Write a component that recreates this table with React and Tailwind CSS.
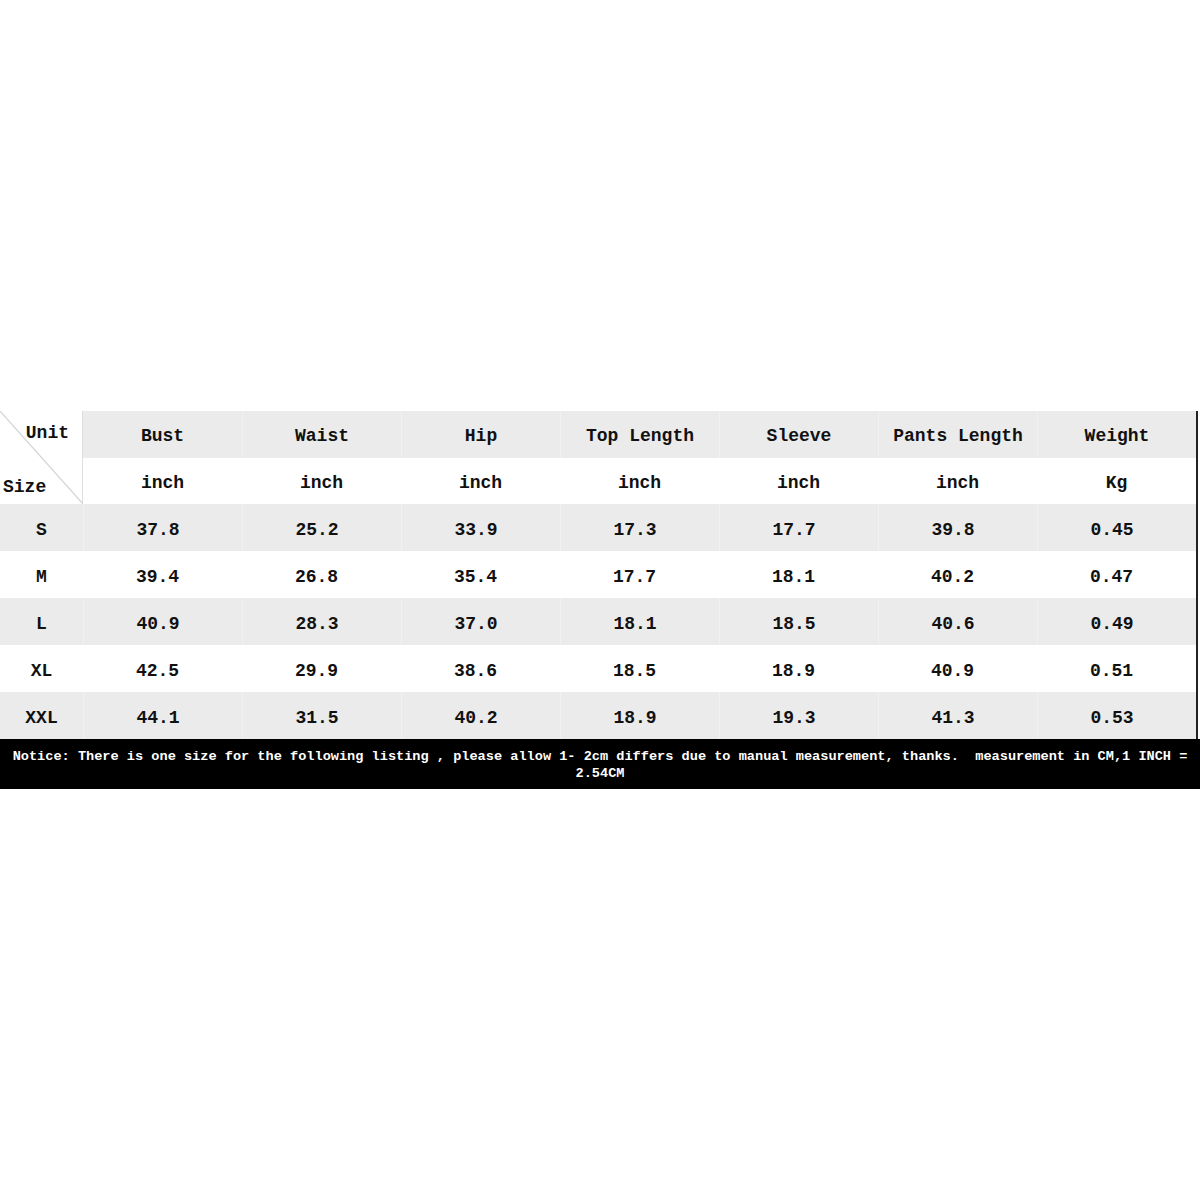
import React from "react";

const columns = ["Bust", "Waist", "Hip", "Top Length", "Sleeve", "Pants Length", "Weight"];
const units = ["inch", "inch", "inch", "inch", "inch", "inch", "Kg"];

const rows = [
  { size: "S", values: ["37.8", "25.2", "33.9", "17.3", "17.7", "39.8", "0.45"] },
  { size: "M", values: ["39.4", "26.8", "35.4", "17.7", "18.1", "40.2", "0.47"] },
  { size: "L", values: ["40.9", "28.3", "37.0", "18.1", "18.5", "40.6", "0.49"] },
  { size: "XL", values: ["42.5", "29.9", "38.6", "18.5", "18.9", "40.9", "0.51"] },
  { size: "XXL", values: ["44.1", "31.5", "40.2", "18.9", "19.3", "41.3", "0.53"] },
];

const font = { fontFamily: '"Liberation Mono", "DejaVu Sans Mono", monospace' };

const SizeChart = () => {
  return (
    <div className="w-[1200px] h-[1200px] bg-white pt-[411px] text-[#111]" style={font}>
      <div className="w-[1198px] border-r-2 border-[#222]">
        {/* header: unit/size corner + column names + units */}
        <div className="flex">
          <div className="relative w-[83px] h-[93px] bg-white flex flex-col justify-between border-r border-[#dedede]">
            <svg className="absolute inset-0" width="83" height="93">
              <line x1="0" y1="0" x2="83" y2="93" stroke="#d4d4d4" strokeWidth="1.2" />
            </svg>
            <span className="relative self-end pr-[13px] pt-[10px] text-[18px] font-bold leading-[24px]">Unit</span>
            <span className="relative self-start pl-[3px] pb-[5px] text-[18px] font-bold leading-[24px]">Size</span>
          </div>
          <div className="flex-1">
            <div className="grid grid-cols-[repeat(7,159px)] h-[47px] bg-[#ebebeb]">
              {columns.map((c, i) => (
                <div
                  key={c}
                  className={`flex items-center justify-center pt-[4px] text-[18px] font-bold ${i > 0 ? "border-l border-[#f1f1f1]" : ""}`}
                >
                  {c}
                </div>
              ))}
            </div>
            <div className="grid grid-cols-[repeat(7,159px)] h-[46px] bg-white">
              {units.map((u, i) => (
                <div key={i} className="flex items-center justify-center pt-[4px] text-[18px] font-bold">
                  {u}
                </div>
              ))}
            </div>
          </div>
        </div>

        {/* size rows */}
        {rows.map((r, idx) => {
          const gray = idx % 2 === 0;
          return (
            <div
              key={r.size}
              className={`grid grid-cols-[83px_repeat(7,159px)] h-[47px] ${gray ? "bg-[#ebebeb]" : "bg-white"}`}
            >
              <div className="flex items-center justify-center pt-[5px] text-[18px] font-bold">{r.size}</div>
              {r.values.map((v, i) => (
                <div
                  key={i}
                  className={`flex items-center justify-center pt-[5px] pr-[10px] text-[18px] font-bold ${gray ? "border-l border-[#f1f1f1]" : ""}`}
                >
                  {v}
                </div>
              ))}
            </div>
          );
        })}
      </div>

      {/* notice bar */}
      <div className="w-[1200px] h-[50px] bg-black text-white text-center text-[13.6px] font-bold leading-[17px] pt-[9px] px-[6px]">
        Notice: There is one size for the following listing , please allow 1- 2cm differs due to manual measurement, thanks.{"\u00a0 "}measurement in CM,1 INCH = 2.54CM
      </div>
    </div>
  );
};

export default function App() {
  return <SizeChart />;
}
